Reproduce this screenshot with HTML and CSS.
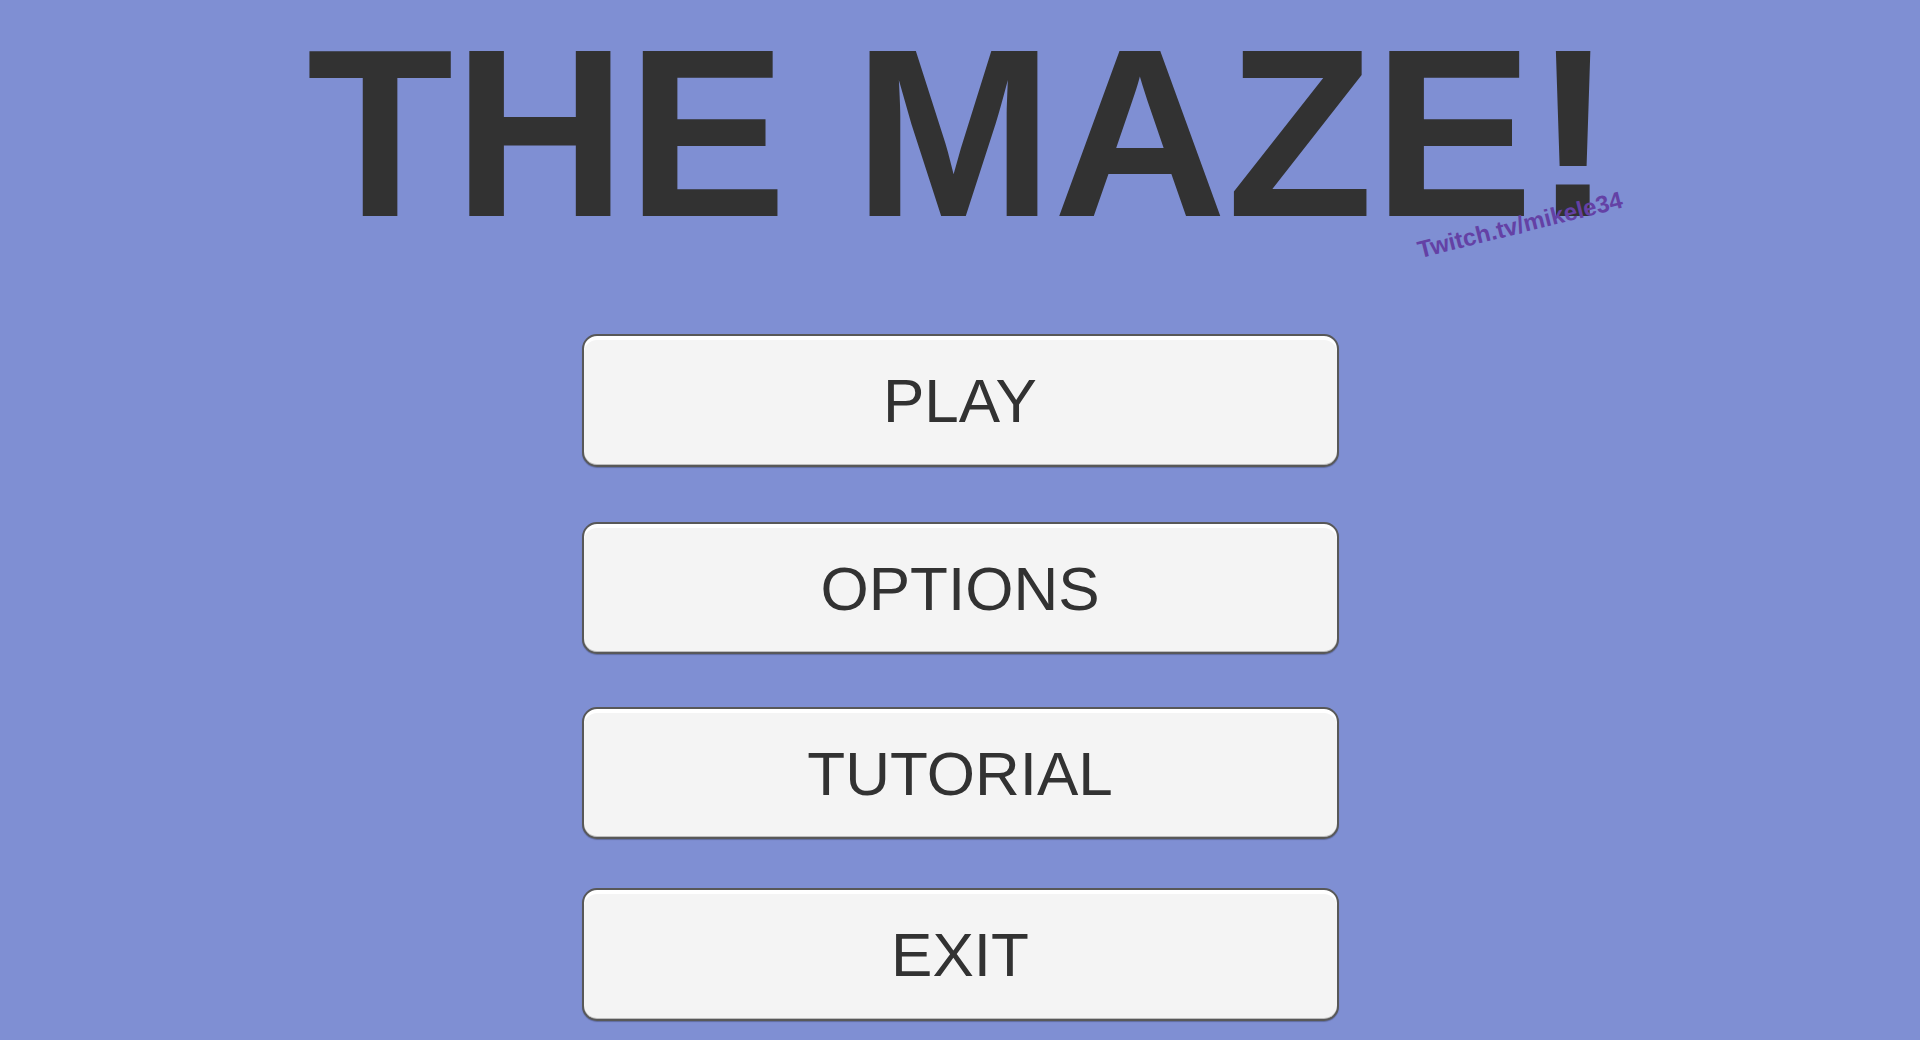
FILE: index.html
```html
<!DOCTYPE html>
<html lang="en">
<head>
  <meta charset="UTF-8">
  <title>The Maze!</title>
  <link rel="stylesheet" href="styles.css">
</head>
<body>
  <div class="header">
    <h1 class="title">THE MAZE!</h1>
    <div class="credit">Twitch.tv/mikele34</div>
  </div>

  <div class="menu">
    <button class="btn btn-play">PLAY</button>
    <button class="btn btn-options">OPTIONS</button>
    <button class="btn btn-tutorial">TUTORIAL</button>
    <button class="btn btn-exit">EXIT</button>
  </div>
</body>
</html>
```

FILE: styles.css
```css
body {
  font-family: "Liberation Sans", Arial, sans-serif;
  background: #7f8fd3;
  margin: 0;
  height: 1040px;
  overflow: hidden;
}

.header {
  position: relative;
  padding-top: 13px;
}

.title {
  margin: 0;
  text-align: center;
  font-size: 240px;
  line-height: 240px;
  font-weight: bold;
  color: #323232;
}

.credit {
  position: absolute;
  left: calc(50% + 452px);
  top: 212px;
  width: 216px;
  line-height: 26px;
  text-align: center;
  font-size: 24px;
  font-weight: bold;
  color: #6441a5;
  transform: rotate(-14deg);
}

.menu {
  display: flex;
  flex-direction: column;
  align-items: center;
  padding-top: 81px;
}

.btn {
  width: 757px;
  height: 133px;
  font-family: inherit;
  font-size: 62px;
  color: #323232;
  background: #f4f4f4;
  border: 2px solid #585858;
  border-radius: 15px;
  box-shadow: inset 0 4px 0 #ffffff, inset 0 -1px 0 #bdbdbd, 0 1px 1px rgba(0,0,0,0.25);
  cursor: pointer;
  padding: 0;
}

.btn-options {
  height: 132px;
  margin-top: 55px;
}

.btn-tutorial {
  height: 132px;
  margin-top: 53px;
}

.btn-exit {
  margin-top: 49px;
}
```
